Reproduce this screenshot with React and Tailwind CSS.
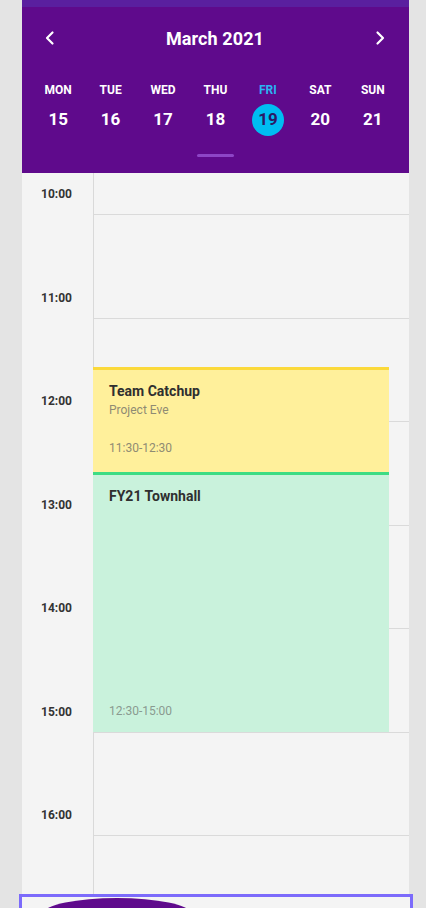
import React from "react";

const days = [
  ["MON", "15"],
  ["TUE", "16"],
  ["WED", "17"],
  ["THU", "18"],
  ["FRI", "19"],
  ["SAT", "20"],
  ["SUN", "21"],
];

const hours = ["10:00", "11:00", "12:00", "13:00", "14:00", "15:00", "16:00"];

function Chevron({ dir }) {
  return (
    <svg width="14" height="16" viewBox="0 0 14 16" fill="none">
      {dir === "left" ? (
        <polyline points="9.5,2.5 4,8 9.5,13.5" stroke="white" strokeWidth="2.2" strokeLinecap="round" strokeLinejoin="round" />
      ) : (
        <polyline points="4.5,2.5 10,8 4.5,13.5" stroke="white" strokeWidth="2.2" strokeLinecap="round" strokeLinejoin="round" />
      )}
    </svg>
  );
}

export default function App() {
  return (
    <div
      className="relative w-[426px] h-[908px] overflow-hidden bg-[#e4e4e4]"
      style={{ fontFamily: "Roboto, 'Noto Sans', sans-serif" }}
    >
      <div className="ml-[22px] w-[387px] bg-[#f4f4f4]">
        <div className="h-[7px] bg-[#5a1f9f]" />
        <div className="h-[166px] bg-[#5f0a8c] flex flex-col">
          <div className="h-[62px] flex items-center justify-between pl-[21px] pr-[22px]">
            <Chevron dir="left" />
            <div className="text-white text-[18px] font-bold tracking-[0.1px]">March 2021</div>
            <Chevron dir="right" />
          </div>
          <div className="mt-[12px] grid grid-cols-7 px-[10px]">
            {days.map(([d, n]) => {
              const active = d === "FRI";
              return (
                <div key={d} className="flex flex-col items-center">
                  <div
                    className={
                      "h-[18px] leading-[18px] text-[12px] font-bold " +
                      (active ? "text-[#2ab4f2]" : "text-white")
                    }
                  >
                    {d}
                  </div>
                  <div
                    className={
                      "mt-[5px] w-[32px] h-[32px] rounded-full flex items-center justify-center text-[17px] font-bold " +
                      (active ? "bg-[#00bdf2] text-[#2b1a66]" : "text-white")
                    }
                  >
                    {n}
                  </div>
                </div>
              );
            })}
          </div>
          <div className="mt-[18px] mx-auto w-[37px] h-[3px] rounded-full bg-[#8d45c6]" />
        </div>

        <div className="relative flex">
          <div className="w-[71px] shrink-0">
            {hours.map((h) => (
              <div key={h} className="h-[103.5px] pr-[21px] pt-[13px] text-right text-[12px] leading-[16px] font-bold text-[#333]">
                {h}
              </div>
            ))}
            <div className="h-[60px]" />
          </div>
          <div className="relative flex-1 border-l border-[#d9d9d9]">
            <div className="h-[42px] border-b border-[#dadada]" />
            {hours.slice(0, 6).map((h) => (
              <div key={h} className="h-[103.5px] border-b border-[#dadada]" />
            ))}

            <div className="absolute left-[-1px] top-[194px] w-[296px] h-[105px] bg-[#fff09b] border-t-[3px] border-[#fbd93a] flex flex-col pl-[16px] pt-[11px] pb-[16px]">
              <div className="text-[14px] leading-[20px] font-bold text-[#2f2f2f]">Team Catchup</div>
              <div className="mt-[1px] text-[12px] leading-[16px] text-[#8f8b73]">Project Eve</div>
              <div className="mt-auto text-[12px] leading-[16px] text-[#8f8b73]">11:30-12:30</div>
            </div>

            <div className="absolute left-[-1px] top-[299px] w-[296px] h-[260px] bg-[#c9f2dc] border-t-[3px] border-[#3ddc84] flex flex-col pl-[16px] pt-[11px] pb-[13px]">
              <div className="text-[14px] leading-[20px] font-bold text-[#2f2f2f]">FY21 Townhall</div>
              <div className="mt-auto text-[12px] leading-[16px] text-[#8a9a90]">12:30-15:00</div>
            </div>
          </div>
        </div>
      </div>

      <div className="absolute left-[19px] top-[894px] w-[394px] h-[40px] border-[3px] border-[#7c6bfb] bg-[#f4f4f4] overflow-hidden">
        <div className="absolute left-[22px] top-[1px] w-[146px] h-[30px] rounded-[50%] bg-[#5f0a8c]" />
      </div>
    </div>
  );
}
